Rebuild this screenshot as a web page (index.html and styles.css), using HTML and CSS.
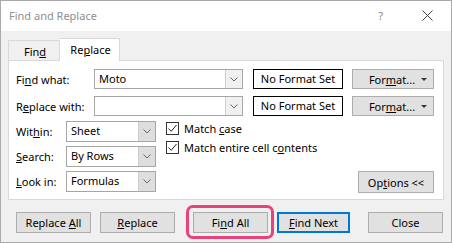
FILE: index.html
```html
<!DOCTYPE html>
<html>
<head>
<meta charset="utf-8">
<link rel="stylesheet" href="styles.css">
</head>
<body>
<div class="window">
  <div class="titlebar">
    <span class="title">Find and Replace</span>
    <span class="help">?</span>
    <svg class="close" width="11" height="11" viewBox="0 0 11 11"><path d="M0.5 0.5 L10.5 10.5 M10.5 0.5 L0.5 10.5" stroke="#444" stroke-width="1" fill="none"/></svg>
  </div>
  <div class="body">
    <div class="tabs">
      <div class="tab"><span>Fin<u>d</u></span></div>
      <div class="tab active"><span>Re<u>p</u>lace</span></div>
    </div>
    <div class="panel">
      <div class="row">
        <span class="label wide">Fi<u>n</u>d what:</span>
        <div class="combo edit"><span class="val">Moto</span><span class="drop"><svg width="8" height="5" viewBox="0 0 8 5"><path d="M0.5 0.5 L4 4 L7.5 0.5" stroke="#666" fill="none"/></svg></span></div>
        <div class="fmtset">No Format Set</div>
        <div class="btn fmt"><span>For<u>m</u>at...</span><span class="tri"></span></div>
      </div>
      <div class="row">
        <span class="label wide">R<u>e</u>place with:</span>
        <div class="combo edit"><span class="val"></span><span class="drop"><svg width="8" height="5" viewBox="0 0 8 5"><path d="M0.5 0.5 L4 4 L7.5 0.5" stroke="#666" fill="none"/></svg></span></div>
        <div class="fmtset">No Format Set</div>
        <div class="btn fmt"><span>For<u>m</u>at...</span><span class="tri"></span></div>
      </div>
      <div class="lower">
        <div class="selects">
          <div class="srow">
            <span class="label">Wit<u>h</u>in:</span>
            <div class="combo list"><span class="val">Sheet</span><span class="drop"><svg width="8" height="5" viewBox="0 0 8 5"><path d="M0.5 0.5 L4 4 L7.5 0.5" stroke="#666" fill="none"/></svg></span></div>
          </div>
          <div class="srow">
            <span class="label"><u>S</u>earch:</span>
            <div class="combo list"><span class="val">By Rows</span><span class="drop"><svg width="8" height="5" viewBox="0 0 8 5"><path d="M0.5 0.5 L4 4 L7.5 0.5" stroke="#666" fill="none"/></svg></span></div>
          </div>
          <div class="srow">
            <span class="label"><u>L</u>ook in:</span>
            <div class="combo list"><span class="val">Formulas</span><span class="drop"><svg width="8" height="5" viewBox="0 0 8 5"><path d="M0.5 0.5 L4 4 L7.5 0.5" stroke="#666" fill="none"/></svg></span></div>
          </div>
        </div>
        <div class="checks">
          <div class="check"><span class="box"><svg width="11" height="11" viewBox="0 0 11 11"><path d="M1.5 5.5 L4.2 8.3 L9.5 2" stroke="#222" stroke-width="1" fill="none"/></svg></span><span>Match <u>c</u>ase</span></div>
          <div class="check"><span class="box"><svg width="11" height="11" viewBox="0 0 11 11"><path d="M1.5 5.5 L4.2 8.3 L9.5 2" stroke="#222" stroke-width="1" fill="none"/></svg></span><span>Match entire cell c<u>o</u>ntents</span></div>
        </div>
        <div class="btn options"><span>Op<u>t</u>ions &lt;&lt;</span></div>
      </div>
    </div>
    <div class="buttons">
      <div class="btn b1"><span>Replace <u>A</u>ll</span></div>
      <div class="btn b2"><span><u>R</u>eplace</span></div>
      <div class="hl-wrap"><div class="btn b3"><span>Fi<u>n</u>d All</span></div><span class="hl"></span></div>
      <div class="btn b4 default"><span><u>F</u>ind Next</span></div>
      <div class="btn b5"><span>Close</span></div>
    </div>
  </div>
</div>
</body>
</html>
```
FILE: styles.css
```css
html, body {
  margin: 0;
  padding: 0;
  background: #f0f0f0;
}
.window {
  width: 452px;
  height: 243px;
  box-sizing: border-box;
  border: 1px solid #a9a9a9;
  background: #f0f0f0;
  font-family: "Noto Sans", "Open Sans", sans-serif;
  font-size: 11px;
  color: #000;
  overflow: hidden;
}
u { text-decoration: underline; text-underline-offset: 1px; }
.titlebar {
  height: 30px;
  background: #fff;
  display: flex;
  align-items: center;
  position: relative;
}
.title {
  margin-left: 8px;
  font-size: 11px;
  color: #8f8f8f;
  flex: 1;
  margin-top: -2px;
}
.help {
  color: #888;
  font-size: 11px;
  margin-right: 39px;
  margin-top: -2px;
}
.close {
  margin-right: 18px;
  margin-top: -2px;
}
.body {
  padding: 0 7px;
}
.tabs {
  height: 29px;
  display: flex;
  align-items: flex-end;
  position: relative;
  z-index: 1;
}
.tab {
  box-sizing: border-box;
  height: 20px;
  width: 52px;
  border: 1px solid #d9d9d9;
  border-bottom: none;
  background: #f0f0f0;
  display: flex;
  align-items: center;
  justify-content: center;
  padding-top: 1px;
  padding-left: 2px;
}
.tab.active {
  height: 23px;
  width: 60px;
  background: #fff;
  border-left: none;
  margin-bottom: -1px;
  padding-bottom: 2px;
}
.panel {
  box-sizing: border-box;
  height: 140px;
  background: #fff;
  border: 1px solid #d9d9d9;
  padding: 8px 9px 0 7px;
}
.row {
  display: flex;
  align-items: center;
  height: 20px;
  margin-bottom: 7px;
}
.row + .row { margin-bottom: 5px; }
.label { display: inline-block; width: 50px; }
.label.wide { width: 78px; }
.combo {
  box-sizing: border-box;
  height: 20px;
  border: 1px solid #a6a6a6;
  background: #fff;
  display: flex;
  align-items: stretch;
}
.combo .val { flex: 1; padding-left: 4px; line-height: 17px; }
.combo .drop {
  width: 16px;
  display: flex;
  align-items: center;
  justify-content: center;
}
.combo.edit { width: 149px; }
.combo.edit .drop {
  border-left: 1px solid #cfcfcf;
  background: #f0f0f0;
}
.combo.list { width: 90px; height: 21px; }
.combo.list .val { line-height: 18px; }
.combo.list .drop {
  background: #dedede;
  border-left: 1px solid #cfcfcf;
}
.fmtset {
  box-sizing: border-box;
  width: 90px;
  height: 20px;
  border: 1px solid #000;
  margin-left: 10px;
  text-align: center;
  line-height: 17px;
}
.btn {
  box-sizing: border-box;
  background: #e1e1e1;
  border: 1px solid #adadad;
  height: 21px;
  display: flex;
  align-items: center;
  justify-content: center;
  white-space: nowrap;
}
.fmt {
  width: 82px;
  height: 20px;
  margin-left: 9px;
  position: relative;
  padding-right: 2px;
}
.tri {
  position: absolute;
  right: 6px;
  top: 8px;
  width: 0;
  height: 0;
  border-left: 3px solid transparent;
  border-right: 3px solid transparent;
  border-top: 3px solid #333;
}
.lower {
  display: flex;
  height: 72px;
}
.selects {
  display: flex;
  flex-direction: column;
  gap: 4px;
}
.srow {
  display: flex;
  align-items: center;
  height: 21px;
}
.checks {
  margin-left: 10px;
  margin-top: 1px;
  display: flex;
  flex-direction: column;
  gap: 6px;
}
.check {
  display: flex;
  align-items: center;
  height: 13px;
  white-space: nowrap;
}
.box {
  box-sizing: border-box;
  width: 13px;
  height: 13px;
  border: 1px solid #333;
  margin-right: 5px;
  display: flex;
}
.options {
  margin-left: auto;
  align-self: flex-end;
  width: 76px;
  height: 22px;
  margin-bottom: 0;
}
.buttons {
  display: flex;
  margin-top: 12px;
  padding-left: 8px;
}
.b1, .b2, .b3, .b4, .b5 { width: 75px; }
.b2 { margin-left: 9px; }
.hl-wrap { position: relative; margin-left: 18px; }
.hl {
  position: absolute;
  left: -7px;
  top: -7px;
  right: -6px;
  bottom: -6px;
  border: 3px solid #e8417b;
  border-radius: 7px;
}
.b4 { margin-left: 9px; width: 73px; }
.default { border: 2px solid #0078d7; }
.b5 { margin-left: 18px; }
```
